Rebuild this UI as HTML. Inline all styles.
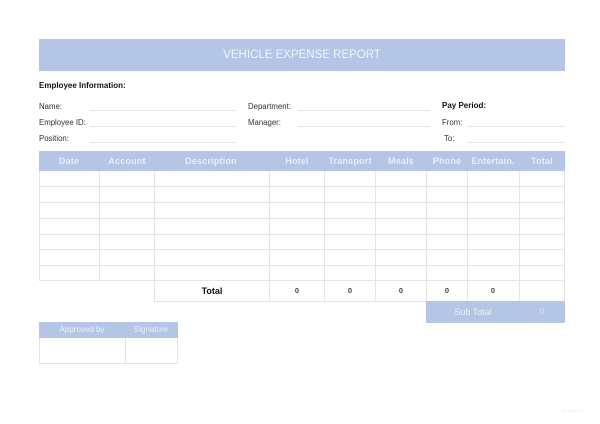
<!DOCTYPE html>
<html>
<head>
<meta charset="utf-8">
<style>
html,body{margin:0;padding:0;background:#fff;}
body{width:600px;height:424px;position:relative;overflow:hidden;font-family:"Liberation Sans",sans-serif;}
.a{position:absolute;}
.t{position:absolute;white-space:nowrap;line-height:12px;}
.l{font-size:7.8px;color:#333;}
.c{transform:translateX(-50%);}
.h{font-size:9px;font-weight:bold;color:#e9edf7;top:155px;letter-spacing:.2px;}
.z{font-size:7.5px;font-weight:bold;color:#444;top:285px;}
.v{position:absolute;width:1px;background:#e4e4e4;}
.r{position:absolute;height:1px;background:#e4e4e4;}
.u{position:absolute;height:1px;background:#e6e6e6;}
</style>
</head>
<body>
<div class="a" style="left:39px;top:39px;width:526px;height:32px;background:#b4c5e6;"></div>
<div class="t c" style="left:302px;top:48px;font-size:11.5px;line-height:15px;color:#f2f5fb;">VEHICLE EXPENSE REPORT</div>

<div class="t" style="left:39px;top:80px;font-size:8px;font-weight:bold;color:#111;">Employee Information:</div>

<div class="t l" style="left:39px;top:101px;">Name:</div>
<div class="t l" style="left:39px;top:117px;">Employee ID:</div>
<div class="t l" style="left:39px;top:133px;">Position:</div>
<div class="t l" style="left:248px;top:101px;">Department:</div>
<div class="t l" style="left:248px;top:117px;">Manager:</div>
<div class="t" style="left:442px;top:100px;font-size:8px;font-weight:bold;color:#111;">Pay Period:</div>
<div class="t l" style="left:442px;top:117px;">From:</div>
<div class="t l" style="left:444px;top:133px;">To:</div>

<div class="u" style="left:90px;top:110px;width:146px;"></div>
<div class="u" style="left:90px;top:126px;width:146px;"></div>
<div class="u" style="left:90px;top:142px;width:146px;"></div>
<div class="u" style="left:298px;top:110px;width:132px;"></div>
<div class="u" style="left:298px;top:126px;width:132px;"></div>
<div class="u" style="left:467px;top:126px;width:98px;"></div>
<div class="u" style="left:467px;top:142px;width:98px;"></div>

<div class="a" style="left:39px;top:151px;width:526px;height:20px;background:#b4c5e6;"></div>
<div class="t h c" style="left:69px;">Date</div>
<div class="t h c" style="left:127px;">Account</div>
<div class="t h c" style="left:211px;">Description</div>
<div class="t h c" style="left:297px;">Hotel</div>
<div class="t h c" style="left:350px;">Transport</div>
<div class="t h c" style="left:401px;">Meals</div>
<div class="t h c" style="left:447px;">Phone</div>
<div class="t h c" style="left:493px;">Entertain.</div>
<div class="t h c" style="left:542px;">Total</div>

<div class="r" style="left:39px;top:186px;width:526px;"></div>
<div class="r" style="left:39px;top:202px;width:526px;"></div>
<div class="r" style="left:39px;top:218px;width:526px;"></div>
<div class="r" style="left:39px;top:234px;width:526px;"></div>
<div class="r" style="left:39px;top:249px;width:526px;"></div>
<div class="r" style="left:39px;top:265px;width:526px;"></div>
<div class="r" style="left:39px;top:280px;width:526px;"></div>
<div class="r" style="left:154px;top:301px;width:272px;"></div>

<div class="v" style="left:39px;top:171px;height:110px;"></div>
<div class="v" style="left:99px;top:171px;height:110px;"></div>
<div class="v" style="left:154px;top:171px;height:131px;"></div>
<div class="v" style="left:269px;top:171px;height:131px;"></div>
<div class="v" style="left:324px;top:171px;height:131px;"></div>
<div class="v" style="left:375px;top:171px;height:131px;"></div>
<div class="v" style="left:426px;top:171px;height:131px;"></div>
<div class="v" style="left:467px;top:171px;height:131px;"></div>
<div class="v" style="left:519px;top:171px;height:131px;"></div>
<div class="v" style="left:564px;top:171px;height:131px;"></div>

<div class="t c" style="left:212px;top:285px;font-size:9px;font-weight:bold;color:#111;">Total</div>
<div class="t z c" style="left:297px;">0</div>
<div class="t z c" style="left:350px;">0</div>
<div class="t z c" style="left:401px;">0</div>
<div class="t z c" style="left:447px;">0</div>
<div class="t z c" style="left:493px;">0</div>

<div class="a" style="left:426px;top:301px;width:139px;height:22px;background:#b4c5e6;"></div>
<div class="t c" style="left:473px;top:306px;font-size:9px;color:#eef1f9;">Sub Total</div>
<div class="t c" style="left:542px;top:306px;font-size:8px;color:#dde4f4;">0</div>

<div class="a" style="left:39px;top:322px;width:139px;height:16px;background:#b4c5e6;"></div>
<div class="t c" style="left:82px;top:324px;font-size:8px;color:#eef1f9;">Approved by</div>
<div class="t c" style="left:151px;top:324px;font-size:8px;color:#eef1f9;">Signature</div>
<div class="v" style="left:39px;top:338px;height:26px;"></div>
<div class="v" style="left:125px;top:338px;height:26px;"></div>
<div class="v" style="left:177px;top:338px;height:26px;"></div>
<div class="r" style="left:39px;top:363px;width:139px;"></div>

<div class="t" style="left:562px;top:408px;font-size:4px;line-height:5px;color:#ececec;">template.net</div>
</body>
</html>
